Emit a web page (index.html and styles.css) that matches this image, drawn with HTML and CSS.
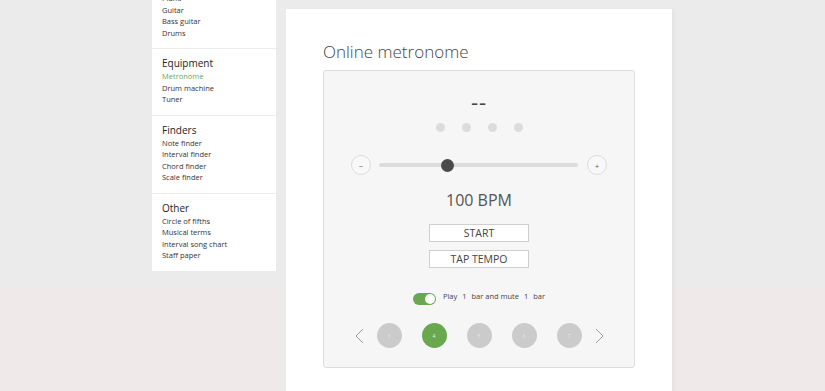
FILE: index.html
```html
<!DOCTYPE html>
<html lang="en">
<head>
<meta charset="utf-8">
<title>Online metronome</title>
<link rel="stylesheet" href="styles.css">
</head>
<body>
<div class="bg-band"></div>
<div class="page">
  <aside class="sidebar">
    <section class="side-section">
      <h3 class="side-title">Instruments</h3>
      <ul class="side-list">
        <li>Piano</li>
        <li>Guitar</li>
        <li>Bass guitar</li>
        <li>Drums</li>
      </ul>
    </section>
    <section class="side-section">
      <h3 class="side-title">Equipment</h3>
      <ul class="side-list">
        <li class="active">Metronome</li>
        <li>Drum machine</li>
        <li>Tuner</li>
      </ul>
    </section>
    <section class="side-section">
      <h3 class="side-title">Finders</h3>
      <ul class="side-list">
        <li>Note finder</li>
        <li>Interval finder</li>
        <li>Chord finder</li>
        <li>Scale finder</li>
      </ul>
    </section>
    <section class="side-section">
      <h3 class="side-title">Other</h3>
      <ul class="side-list">
        <li>Circle of fifths</li>
        <li>Musical terms</li>
        <li>Interval song chart</li>
        <li>Staff paper</li>
      </ul>
    </section>
  </aside>

  <main class="main">
    <h1 class="page-title">Online metronome</h1>
    <div class="metro">
      <div class="beat-text">--</div>
      <div class="dots">
        <span class="dot"></span><span class="dot"></span><span class="dot"></span><span class="dot"></span>
      </div>
      <div class="slider-row">
        <span class="round-btn">&minus;</span>
        <div class="track"><span class="thumb"></span></div>
        <span class="round-btn">+</span>
      </div>
      <div class="bpm">100 BPM</div>
      <button class="btn">START</button>
      <button class="btn">TAP TEMPO</button>
      <div class="toggle-row">
        <span class="toggle"><span class="knob"></span></span>
        <span class="toggle-text">Play <b>1</b> bar and mute <b>1</b> bar</span>
      </div>
      <div class="pager">
        <svg class="chev" width="10" height="16" viewBox="0 0 10 16"><path d="M9 1 L2 8 L9 15" fill="none" stroke="#9a9a9a" stroke-width="1"/></svg>
        <span class="num">3</span>
        <span class="num on">4</span>
        <span class="num">5</span>
        <span class="num">6</span>
        <span class="num">7</span>
        <svg class="chev" width="10" height="16" viewBox="0 0 10 16"><path d="M1 1 L8 8 L1 15" fill="none" stroke="#9a9a9a" stroke-width="1"/></svg>
      </div>
    </div>
  </main>
</div>
</body>
</html>
```

FILE: styles.css
```css
* { box-sizing: border-box; }
html, body { margin: 0; padding: 0; }
body {
  background: #ebebeb;
  font-family: "Open Sans", "Liberation Sans", sans-serif;
  color: #333;
  height: 391px;
  overflow: hidden;
  position: relative;
}
.bg-band {
  position: absolute;
  left: 0; right: 0; top: 288px; bottom: 0;
  background: #efe9e9;
}
.page {
  position: relative;
  display: flex;
  align-items: flex-start;
  gap: 10px;
  padding-left: 152px;
}
.sidebar {
  width: 124px;
  background: #fff;
  margin-top: -30px;
}
.side-section {
  border-top: 1px solid #ececec;
  padding: 7px 10px 9px;
}
.side-section:first-child { border-top: none; padding-top: 8px; }
.side-title {
  margin: 0 0 1px;
  font-size: 10px;
  line-height: 14px;
  font-weight: 400;
  color: #222;
}
.side-list {
  list-style: none;
  margin: 0;
  padding: 0;
  font-size: 7.5px;
  line-height: 11.5px;
  color: #333;
}
.side-list .active { color: #6aa84f; }

.main {
  width: 386px;
  margin-top: 9px;
  background: #fff;
  min-height: 400px;
  padding: 32px 37px 0;
  box-shadow: 3px 0 4px rgba(0,0,0,0.03);
}
.page-title {
  margin: 0 0 7px;
  font-size: 17px;
  line-height: 22px;
  font-weight: 300;
  color: #444;
}
.metro {
  width: 312px;
  height: 298px;
  background: #f6f6f6;
  border: 1px solid #dedede;
  border-radius: 3px;
  display: flex;
  flex-direction: column;
  align-items: center;
  padding-top: 17px;
}
.beat-text {
  font-size: 22px;
  line-height: 26px;
  color: #444;
  letter-spacing: 1px;
}
.dots {
  display: flex;
  gap: 17px;
  margin-top: 9px;
}
.dot {
  width: 9px; height: 9px;
  border-radius: 50%;
  background: #dcdcdc;
}
.slider-row {
  display: flex;
  align-items: center;
  margin-top: 23px;
}
.round-btn {
  width: 20px; height: 20px;
  border-radius: 50%;
  border: 1px solid #dcdcdc;
  background: #f8f8f8;
  display: flex;
  align-items: center;
  justify-content: center;
  font-size: 8px;
  color: #666;
}
.track {
  position: relative;
  width: 199px;
  height: 4px;
  border-radius: 2px;
  background: #dcdcdc;
  margin: 0 9px 0 8px;
}
.thumb {
  position: absolute;
  left: 62px;
  top: -4.5px;
  width: 13px; height: 13px;
  border-radius: 50%;
  background: #4a4a4a;
}
.bpm {
  margin-top: 14px;
  font-size: 16px;
  line-height: 22px;
  color: #555;
}
.btn {
  margin-top: 13px;
  width: 100px;
  height: 18px;
  background: #fff;
  border: 1px solid #cfcfcf;
  font-family: "Open Sans", "Liberation Sans", sans-serif;
  font-size: 10.5px;
  color: #444;
  padding: 0;
  line-height: 16px;
}
.btn + .btn { margin-top: 8px; }
.toggle-row {
  display: flex;
  align-items: center;
  gap: 7px;
  margin-top: 19px;
}
.toggle {
  width: 23px; height: 12px;
  border-radius: 6px;
  background: #6aa84f;
  position: relative;
  margin-top: 6px;
}
.knob {
  position: absolute;
  right: 1px; top: 1px;
  width: 10px; height: 10px;
  border-radius: 50%;
  background: #fff;
}
.toggle-text {
  font-size: 7.5px;
  color: #444;
}
.toggle-text b { font-weight: 400; margin: 0 3px; }
.pager {
  display: flex;
  align-items: center;
  margin-top: 18px;
  gap: 20px;
}
.chev { margin: 0 -6px; }
.pager .chev:first-child { margin-right: -7px; }
.pager .chev:last-child { margin-left: -7px; }
.num {
  width: 25px; height: 25px;
  border-radius: 50%;
  background: #cbcbcb;
  color: #e8e8e8;
  font-size: 5px;
  display: flex;
  align-items: center;
  justify-content: center;
}
.num.on { background: #6aa84f; color: #e6f0e0; }
```
